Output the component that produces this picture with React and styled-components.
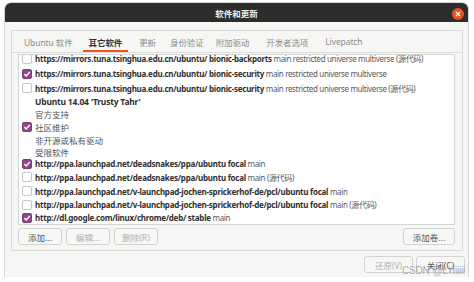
import React from "react";
import styled, { createGlobalStyle } from "styled-components";

const Global = createGlobalStyle`
  html, body { margin: 0; padding: 0; background: #ffffff; }
  body { font-family: "Noto Sans", "Noto Sans CJK SC", sans-serif; }
`;

const Window = styled.div`
  margin: 3px 0 0 5px;
  width: 463px;
  height: 274px;
  display: flex;
  flex-direction: column;
  background: #f6f6f5;
  border-radius: 6px 6px 0 0;
  box-shadow: 0 0 0 1px #d4d4d4;
  overflow: hidden;
`;

const TitleBar = styled.div`
  position: relative;
  height: 19px;
  flex: none;
  background: #2d2d2d;
  color: #f2f2f2;
  display: flex;
  align-items: center;
  justify-content: center;
  font-size: 8.5px;
  font-weight: 700;
  font-family: "Noto Sans CJK SC", sans-serif;
`;

const CloseBtn = styled.div`
  position: absolute;
  right: 4px;
  top: 5px;
  width: 12px;
  height: 12px;
  border-radius: 50%;
  background: #e95420;
  display: flex;
  align-items: center;
  justify-content: center;
`;

const Notebook = styled.div`
  margin: 8px 5px 0 6px;
  border: 1px solid #d9d9d8;
  display: flex;
  flex-direction: column;
  height: 221px;
  box-sizing: border-box;
`;

const TabBar = styled.div`
  height: 21px;
  flex: none;
  display: flex;
  align-items: stretch;
  padding-left: 7px;
  border-bottom: 1px solid #dcdcdb;
  background: #f6f6f5;
`;

const Tab = styled.div`
  padding: 0 ${p => p.$pad}px;
  margin-right: ${p => p.$gap}px;
  display: flex;
  align-items: center;
  font-size: 8.5px;
  letter-spacing: -0.1px;
  font-family: "Noto Sans", "Noto Sans CJK SC", sans-serif;
  color: ${p => (p.$active ? "#333333" : "#8c8c8c")};
  font-weight: ${p => (p.$active ? 700 : 400)};
  box-shadow: ${p => (p.$active ? "inset 0 -2px 0 #e95420" : "none")};
`;

const Page = styled.div`
  flex: 1;
  display: flex;
  flex-direction: column;
  padding: 1px 7px 0 6px;
`;

const List = styled.div`
  height: 171px;
  background: #ffffff;
  border: 1px solid #d6d6d5;
  box-sizing: border-box;
  overflow: hidden;
  padding-left: 3px;
`;

const Row = styled.div`
  height: ${p => p.$h}px;
  margin-top: ${p => p.$mt || 0}px;
  display: flex;
  align-items: center;
  gap: 3px;
  font-size: 8px;
  color: #3c3c3c;
  white-space: nowrap;
  font-family: "Noto Sans", "Noto Sans CJK SC", sans-serif;
`;

const Indent = styled.div`
  width: 10px;
  flex: none;
`;

const Box = styled.div`
  width: 10px;
  height: 10px;
  box-sizing: border-box;
  flex: none;
  border-radius: 2px;
  background: ${p => (p.$on ? "#8e4a86" : "#ffffff")};
  border: 1px solid ${p => (p.$on ? "#7d3f76" : "#c6c6c6")};
  display: flex;
  align-items: center;
  justify-content: center;
`;

const B = styled.span`
  font-weight: 700;
  color: #2f2f2f;
  letter-spacing: -0.25px;
`;

const Dim = styled.span`
  color: #5a5a5a;
  letter-spacing: -0.35px;
`;

const Plain = styled.span`
  color: ${p => (p.$strong ? "#2f2f2f" : "#555555")};
  font-weight: ${p => (p.$strong ? 700 : 400)};
  font-size: 8.5px;
  letter-spacing: ${p => (p.$strong ? "-0.2px" : "0")};
  font-family: "Noto Sans", "Noto Sans CJK SC", sans-serif;
`;

const ButtonRow = styled.div`
  display: flex;
  align-items: center;
  gap: 4px;
  margin-top: 3px;
`;

const Spacer = styled.div`
  flex: 1;
`;

const Btn = styled.div`
  height: 17px;
  width: ${p => p.$w}px;
  box-sizing: border-box;
  border: 1px solid #d3d3d2;
  border-radius: 3px;
  background: #f7f7f6;
  display: flex;
  align-items: center;
  justify-content: center;
  font-size: 8.5px;
  font-family: "Noto Sans", "Noto Sans CJK SC", sans-serif;
  color: ${p => (p.$disabled ? "#b2b2b2" : "#555555")};
`;

const Footer = styled.div`
  display: flex;
  justify-content: flex-end;
  gap: 3px;
  padding: 5px 3px 0 0;
  position: relative;
`;

const Watermark = styled.div`
  position: absolute;
  right: 3px;
  top: 14px;
  font-size: 10px;
  font-family: "Liberation Sans", sans-serif;
  color: rgba(150, 150, 150, 0.8);
  letter-spacing: -0.2px;
`;

const Check = () => (
  <svg width="8" height="8" viewBox="0 0 8 8">
    <path d="M1.3 4.1 L3.2 5.9 L6.8 2" fill="none" stroke="#ffffff" strokeWidth="1.4" />
  </svg>
);

const rows = [
  { h: 15, mt: -4, box: false, url: "https://mirrors.tuna.tsinghua.edu.cn/ubuntu/ bionic-backports", rest: " main restricted universe multiverse (源代码)" },
  { h: 15, box: true, on: true, url: "https://mirrors.tuna.tsinghua.edu.cn/ubuntu/ bionic-security", rest: " main restricted universe multiverse" },
  { h: 14, box: true, on: false, url: "https://mirrors.tuna.tsinghua.edu.cn/ubuntu/ bionic-security", rest: " main restricted universe multiverse (源代码)" },
  { h: 13, text: "Ubuntu 14.04 'Trusty Tahr'", strong: true },
  { h: 12, text: "官方支持" },
  { h: 13, box: true, on: true, text: "社区维护" },
  { h: 13, text: "非开源或私有驱动" },
  { h: 11, text: "受限软件" },
  { h: 13, box: true, on: true, url: "http://ppa.launchpad.net/deadsnakes/ppa/ubuntu focal", rest: " main" },
  { h: 14, box: true, on: false, url: "http://ppa.launchpad.net/deadsnakes/ppa/ubuntu focal", rest: " main (源代码)" },
  { h: 14, box: true, on: false, url: "http://ppa.launchpad.net/v-launchpad-jochen-sprickerhof-de/pcl/ubuntu focal", rest: " main" },
  { h: 13, box: true, on: false, url: "http://ppa.launchpad.net/v-launchpad-jochen-sprickerhof-de/pcl/ubuntu focal", rest: " main (源代码)" },
  { h: 13, box: true, on: true, url: "http://dl.google.com/linux/chrome/deb/ stable", rest: " main" },
];

const tabs = [
  { label: "Ubuntu 软件", pad: 5, gap: 5 },
  { label: "其它软件", active: true, pad: 6, gap: 5 },
  { label: "更新", pad: 6, gap: 2 },
  { label: "身份验证", pad: 6, gap: 0 },
  { label: "附加驱动", pad: 6, gap: 5 },
  { label: "开发者选项", pad: 6, gap: 5 },
  { label: "Livepatch", pad: 6, gap: 0 },
];

export default function App() {
  return (
    <>
      <Global />
      <Window>
        <TitleBar>
          软件和更新
          <CloseBtn>
            <svg width="6" height="6" viewBox="0 0 6 6">
              <path d="M1 1 L5 5 M5 1 L1 5" stroke="#ffffff" strokeWidth="1.2" />
            </svg>
          </CloseBtn>
        </TitleBar>
        <Notebook>
          <TabBar>
            {tabs.map(t => (
              <Tab key={t.label} $active={t.active} $pad={t.pad} $gap={t.gap}>
                {t.label}
              </Tab>
            ))}
          </TabBar>
          <Page>
            <List>
              {rows.map((r, i) => (
                <Row key={i} $h={r.h} $mt={r.mt}>
                  {r.box === undefined ? (
                    <Indent />
                  ) : (
                    <Box $on={r.on}>{r.on && <Check />}</Box>
                  )}
                  {r.url ? (
                    <span>
                      <B>{r.url}</B>
                      <Dim>{r.rest}</Dim>
                    </span>
                  ) : (
                    <Plain $strong={r.strong}>{r.text}</Plain>
                  )}
                </Row>
              ))}
            </List>
            <ButtonRow>
              <Btn $w={44}>添加...</Btn>
              <Btn $w={44} $disabled>编辑...</Btn>
              <Btn $w={44} $disabled>删除(R)</Btn>
              <Spacer />
              <Btn $w={52}>添加卷...</Btn>
            </ButtonRow>
          </Page>
        </Notebook>
        <Footer>
          <Btn $w={49} $disabled>还原(V)</Btn>
          <Btn $w={49}>关闭(C)</Btn>
          <Watermark>CSDN @LYiiiiii</Watermark>
        </Footer>
      </Window>
    </>
  );
}
